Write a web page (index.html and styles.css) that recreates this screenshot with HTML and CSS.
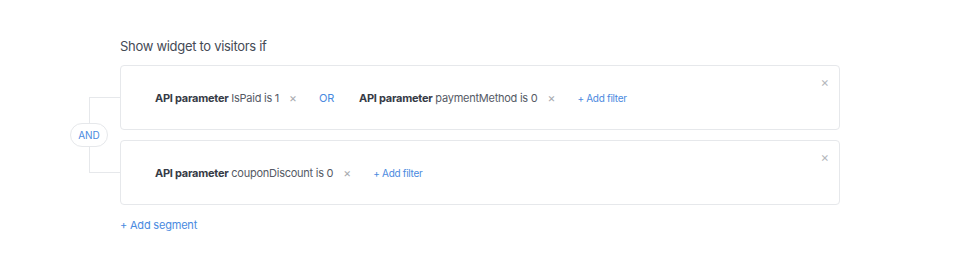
FILE: index.html
```html
<!DOCTYPE html>
<html lang="en">
<head>
  <meta charset="UTF-8">
  <title>Widget targeting</title>
  <link rel="stylesheet" href="styles.css">
</head>
<body>
  <div class="targeting">
    <h2 class="targeting-title">Show widget to visitors if</h2>

    <div class="segments">
      <div class="logic">
        <div class="bracket">
          <span class="and-pill">AND</span>
        </div>
      </div>

      <div class="segment-list">
        <div class="segment">
          <button class="segment-close">&times;</button>
          <div class="filter">
            <span class="filter-text"><b>API parameter</b> IsPaid is 1</span>
            <button class="filter-remove">&times;</button>
          </div>
          <span class="or-label">OR</span>
          <div class="filter">
            <span class="filter-text"><b>API parameter</b> paymentMethod is 0</span>
            <button class="filter-remove">&times;</button>
          </div>
          <a class="add-filter" href="#">+ Add filter</a>
        </div>

        <div class="segment">
          <button class="segment-close">&times;</button>
          <div class="filter">
            <span class="filter-text"><b>API parameter</b> couponDiscount is 0</span>
            <button class="filter-remove">&times;</button>
          </div>
          <a class="add-filter" href="#">+ Add filter</a>
        </div>
      </div>
    </div>

    <a class="add-segment" href="#">+ Add segment</a>
  </div>
</body>
</html>
```

FILE: styles.css
```css
:root {
  --text-dark: #363b46;
  --text-muted: #555a65;
  --blue: #4a8ae0;
  --line: #e6e8eb;
}

* {
  margin: 0;
  padding: 0;
  box-sizing: border-box;
}

body {
  font-family: 'Inter', 'Noto Sans', sans-serif;
  background: #ffffff;
  color: var(--text-dark);
  letter-spacing: -0.3px;
}

.targeting {
  padding: 36px 0 0 70px;
}

.targeting-title {
  margin-left: 50px;
  font-size: 13px;
  font-weight: 400;
  line-height: 20px;
  color: #454a55;
  margin-bottom: 9px;
}

.segments {
  display: flex;
}

.logic {
  width: 50px;
  display: flex;
  align-items: center;
}

.bracket {
  width: 31px;
  height: 76px;
  margin-left: 19px;
  border: 1px solid var(--line);
  border-right: none;
  display: flex;
  align-items: center;
}

.and-pill {
  margin-left: -20px;
  width: 38px;
  height: 24px;
  border: 1px solid var(--line);
  border-radius: 12px;
  background: #fff;
  color: var(--blue);
  font-size: 10px;
  letter-spacing: 0;
  display: flex;
  align-items: center;
  justify-content: center;
}

.segment-list {
  display: flex;
  flex-direction: column;
  gap: 10px;
}

.segment {
  position: relative;
  width: 720px;
  height: 65px;
  border: 1px solid var(--line);
  border-radius: 4px;
  padding-left: 34px;
  display: flex;
  align-items: center;
  font-size: 11px;
  letter-spacing: -0.25px;
}

.segment-close {
  position: absolute;
  top: 8px;
  right: 10px;
  border: none;
  background: none;
  color: #b5b8bd;
  font-size: 13px;
  font-family: 'Inter', sans-serif;
  cursor: pointer;
}

.filter {
  display: flex;
  align-items: center;
}

.filter-text {
  color: var(--text-muted);
}

.filter-text b {
  font-weight: 700;
  color: var(--text-dark);
}

.filter-remove {
  margin: 0 22px 0 10px;
  border: none;
  background: none;
  color: #a8abb0;
  font-size: 12px;
  font-family: 'Inter', sans-serif;
  cursor: pointer;
}

.or-label {
  color: var(--blue);
  margin-right: 25px;
}

.add-filter,
.add-segment {
  color: var(--blue);
  text-decoration: none;
}

.add-filter {
  font-size: 10px;
  letter-spacing: -0.3px;
}

.add-segment {
  display: inline-block;
  margin: 13px 0 0 50px;
  font-size: 11px;
  letter-spacing: -0.2px;
}
```
